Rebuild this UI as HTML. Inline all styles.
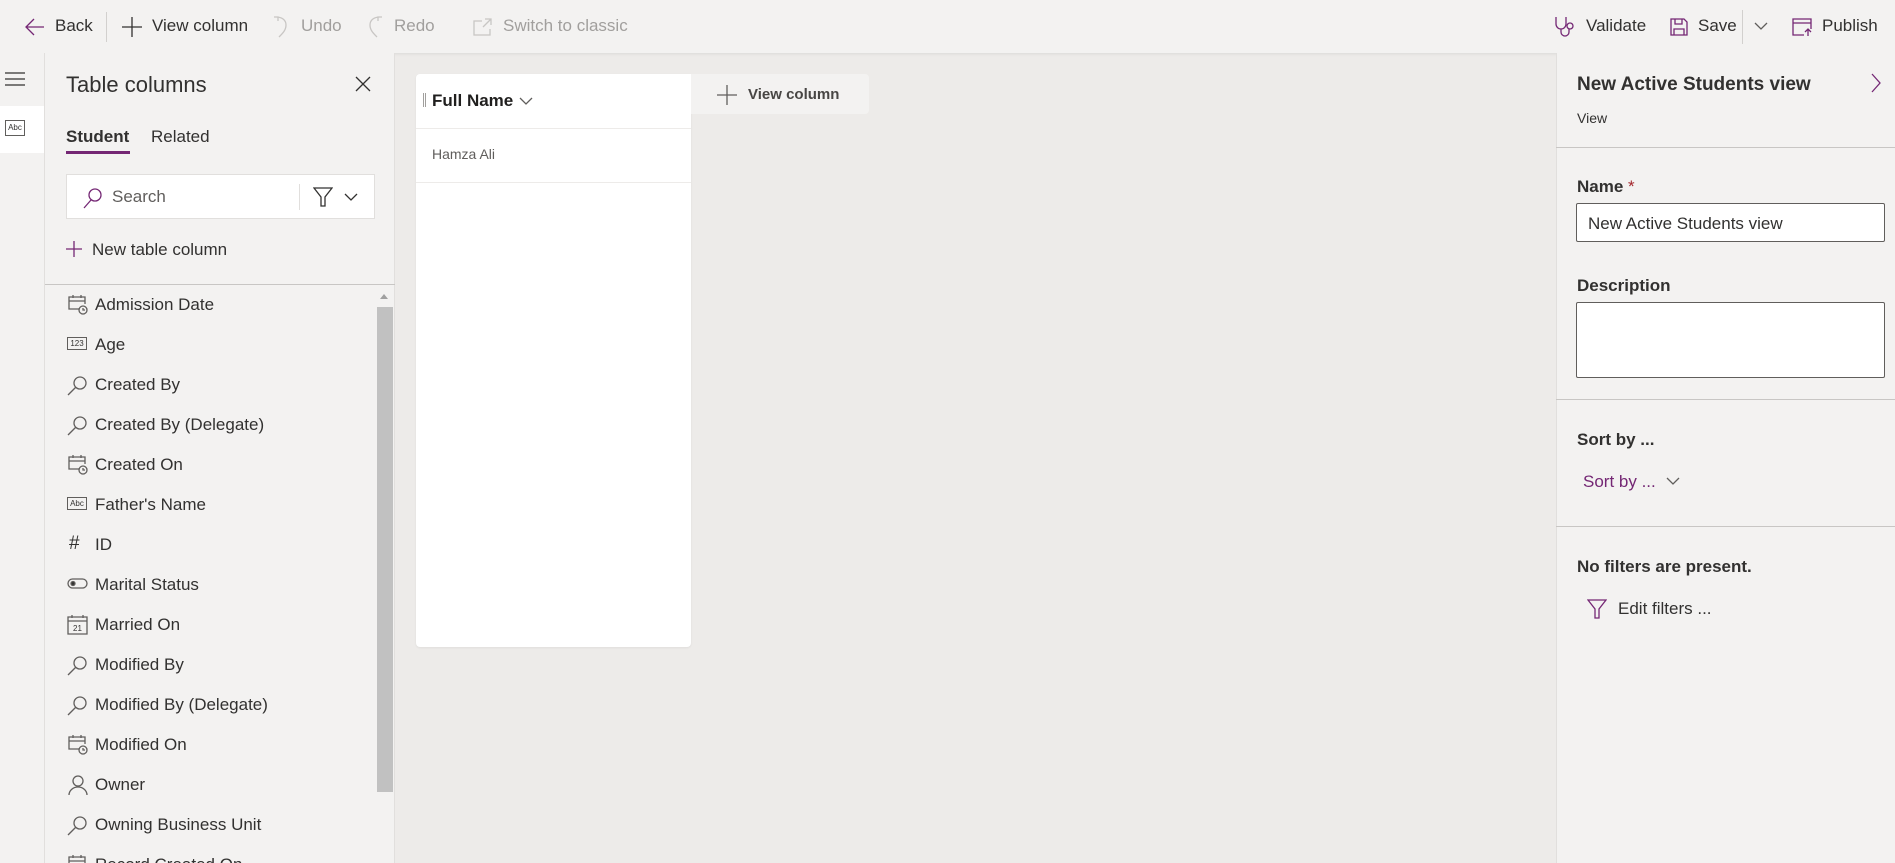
<!DOCTYPE html>
<html><head><meta charset="utf-8"><style>
*{margin:0;padding:0;box-sizing:border-box}
html{overflow:hidden;width:1895px;height:863px}
body{width:1895px;height:863px;overflow:hidden;background:#edebe9;font-family:"Liberation Sans",sans-serif;color:#323130;position:relative}
.a{position:absolute;white-space:nowrap}
svg{position:absolute;fill:none;stroke-width:1.3}
.tb{font-size:17px;top:16px}
.it{font-size:17px;color:#323130;left:95px}
</style></head><body>
<!-- toolbar -->
<div class="a" style="left:0;top:0;width:1895px;height:53px;background:#f3f2f1;box-shadow:0 1px 3px rgba(0,0,0,.08)"></div>
<svg style="left:24px;top:16px" width="22" height="22" viewBox="0 0 22 22" stroke="#742774"><path d="M20 11H3M10 3l-8 8 8 8"/></svg>
<div class="a tb" style="left:55px">Back</div>
<div class="a" style="left:106px;top:12px;width:1px;height:30px;background:#d2d0ce"></div>
<svg style="left:121px;top:16px" width="22" height="22" viewBox="0 0 22 22" stroke="#323130"><path d="M11 1v20M1 11h20"/></svg>
<div class="a tb" style="left:152px">View column</div>
<svg style="left:272px;top:15px" width="18" height="24" viewBox="0 0 18 24" stroke="#c8c6c4"><path d="M4 2c6 0 10 3 10 8s-3 8-7 12M2 2h4v4"/></svg>
<div class="a tb" style="left:301px;color:#a19f9d">Undo</div>
<svg style="left:366px;top:15px" width="18" height="24" viewBox="0 0 18 24" stroke="#c8c6c4"><path d="M14 2C8 2 4 5 4 10s3 8 7 12M16 2h-4v4"/></svg>
<div class="a tb" style="left:394px;color:#a19f9d">Redo</div>
<svg style="left:472px;top:17px" width="22" height="20" viewBox="0 0 22 20" stroke="#c8c6c4"><path d="M10 4H2v14h16v-6M13 2h6v6M19 2l-8 8"/></svg>
<div class="a tb" style="left:503px;color:#a19f9d">Switch to classic</div>
<svg style="left:1554px;top:15px" width="22" height="24" viewBox="0 0 22 24" stroke="#742774"><path d="M2 2v7a5 5 0 0 0 10 0V2M7 14v3a4 4 0 0 0 8 0v-3"/><circle cx="16" cy="11" r="3"/></svg>
<div class="a tb" style="left:1586px">Validate</div>
<svg style="left:1669px;top:17px" width="20" height="20" viewBox="0 0 20 20" stroke="#742774"><path d="M2 2h13l3 3v13H2zM6 2v5h7V2M5 18v-6h10v6"/></svg>
<div class="a tb" style="left:1698px">Save</div>
<div class="a" style="left:1742px;top:10px;width:1px;height:34px;background:#d2d0ce"></div>
<svg style="left:1754px;top:21px" width="14" height="10" viewBox="0 0 14 10" stroke="#605e5c"><path d="M1 2l6 6 6-6"/></svg>
<svg style="left:1791px;top:17px" width="22" height="20" viewBox="0 0 22 20" stroke="#742774"><path d="M13 18H2V2h18v10M2 6h18M17 19v-7M14 15l3-3 3 3"/></svg>
<div class="a tb" style="left:1822px">Publish</div>

<!-- left rail -->
<div class="a" style="left:0;top:53px;width:45px;height:810px;background:#f3f2f1;border-right:1px solid #e1dfdd"></div>
<svg style="left:5px;top:72px" width="20" height="14" viewBox="0 0 20 14" stroke="#323130"><path d="M0 1h20M0 7h20M0 13h20"/></svg>
<div class="a" style="left:0;top:106px;width:44px;height:47px;background:#fff"></div>
<div class="a" style="left:5px;top:120px;width:20px;height:16px;border:1px solid #605e5c;font-size:8px;line-height:14px;text-align:center;color:#323130">Abc</div>

<!-- table columns panel -->
<div class="a" style="left:45px;top:53px;width:350px;height:810px;background:#f3f2f1;border-right:1px solid #e1dfdd"></div>
<div class="a" style="left:66px;top:72px;font-size:22px;color:#323130">Table columns</div>
<svg style="left:355px;top:76px" width="16" height="16" viewBox="0 0 16 16" stroke="#323130"><path d="M1 1l14 14M15 1L1 15"/></svg>
<div class="a" style="left:66px;top:127px;font-size:17px;font-weight:bold;color:#323130">Student</div>
<div class="a" style="left:66px;top:151px;width:64px;height:3px;background:#742774"></div>
<div class="a" style="left:151px;top:127px;font-size:17px">Related</div>
<div class="a" style="left:66px;top:174px;width:309px;height:45px;background:#fff;border:1px solid #e1dfdd"></div>
<svg style="left:82px;top:186px" width="22" height="24" viewBox="0 0 22 24" stroke="#742774"><circle cx="13" cy="9" r="6"/><path d="M9 14L2 22"/></svg>
<div class="a" style="left:112px;top:187px;font-size:17px;color:#605e5c">Search</div>
<div class="a" style="left:299px;top:184px;width:1px;height:26px;background:#e1dfdd"></div>
<svg style="left:313px;top:186px" width="20" height="22" viewBox="0 0 20 22" stroke="#323130"><path d="M1 2h18l-7 9v9h-4v-9z"/></svg>
<svg style="left:344px;top:192px" width="14" height="10" viewBox="0 0 14 10" stroke="#323130"><path d="M1 2l6 6 6-6"/></svg>
<svg style="left:66px;top:241px" width="16" height="16" viewBox="0 0 16 16" stroke="#742774"><path d="M8 0v16M0 8h16"/></svg>
<div class="a" style="left:92px;top:240px;font-size:17px">New table column</div>
<div class="a" style="left:45px;top:284px;width:350px;height:1px;background:#c8c6c4"></div>
<div class="a" style="left:377px;top:307px;width:16px;height:485px;background:#c1c1c1"></div>
<svg style="left:379px;top:292px" width="10" height="8" viewBox="0 0 10 8"><path d="M1 7l4-5 4 5z" fill="#a0a0a0" stroke="none"/></svg>

<!-- list items -->
<div class="a it" style="top:295px">Admission Date</div>
<div class="a it" style="top:335px">Age</div>
<div class="a it" style="top:375px">Created By</div>
<div class="a it" style="top:415px">Created By (Delegate)</div>
<div class="a it" style="top:455px">Created On</div>
<div class="a it" style="top:495px">Father's Name</div>
<div class="a it" style="top:535px">ID</div>
<div class="a it" style="top:575px">Marital Status</div>
<div class="a it" style="top:615px">Married On</div>
<div class="a it" style="top:655px">Modified By</div>
<div class="a it" style="top:695px">Modified By (Delegate)</div>
<div class="a it" style="top:735px">Modified On</div>
<div class="a it" style="top:775px">Owner</div>
<div class="a it" style="top:815px">Owning Business Unit</div>
<div class="a it" style="top:855px">Record Created On</div>
<!-- list icons -->
<svg style="left:67px;top:294px" width="22" height="22" viewBox="0 0 22 22" stroke="#605e5c"><path d="M12 15H2V3h16v7M2 7h16M6 1v3M14 1v3"/><circle cx="16" cy="16" r="4"/><path d="M16 14v2h2"/></svg>
<div class="a" style="left:67px;top:337px;width:20px;height:13px;border:1px solid #605e5c;font-size:8px;line-height:11px;text-align:center">123</div>
<svg style="left:67px;top:375px" width="22" height="22" viewBox="0 0 22 22" stroke="#605e5c"><circle cx="13" cy="8" r="6"/><path d="M9 12L1 20"/></svg>
<svg style="left:67px;top:415px" width="22" height="22" viewBox="0 0 22 22" stroke="#605e5c"><circle cx="13" cy="8" r="6"/><path d="M9 12L1 20"/></svg>
<svg style="left:67px;top:454px" width="22" height="22" viewBox="0 0 22 22" stroke="#605e5c"><path d="M12 15H2V3h16v7M2 7h16M6 1v3M14 1v3"/><circle cx="16" cy="16" r="4"/><path d="M16 14v2h2"/></svg>
<div class="a" style="left:67px;top:497px;width:20px;height:13px;border:1px solid #605e5c;font-size:8px;line-height:11px;text-align:center">Abc</div>
<div class="a" style="left:69px;top:533px;font-size:19px;color:#323130">#</div>
<svg style="left:67px;top:577px" width="22" height="14" viewBox="0 0 22 14" stroke="#605e5c"><rect x="1" y="2" width="19" height="9" rx="4.5"/><circle cx="6" cy="6.5" r="2" fill="#323130"/></svg>
<svg style="left:67px;top:614px" width="22" height="22" viewBox="0 0 22 22" stroke="#605e5c"><path d="M1 3h19v17H1zM1 7h19M5 1v3M16 1v3"/><text x="10.5" y="17" font-size="8" text-anchor="middle" fill="#323130" stroke="none" font-family="Liberation Sans">21</text></svg>
<svg style="left:67px;top:655px" width="22" height="22" viewBox="0 0 22 22" stroke="#605e5c"><circle cx="13" cy="8" r="6"/><path d="M9 12L1 20"/></svg>
<svg style="left:67px;top:695px" width="22" height="22" viewBox="0 0 22 22" stroke="#605e5c"><circle cx="13" cy="8" r="6"/><path d="M9 12L1 20"/></svg>
<svg style="left:67px;top:734px" width="22" height="22" viewBox="0 0 22 22" stroke="#605e5c"><path d="M12 15H2V3h16v7M2 7h16M6 1v3M14 1v3"/><circle cx="16" cy="16" r="4"/><path d="M16 14v2h2"/></svg>
<svg style="left:67px;top:774px" width="22" height="22" viewBox="0 0 22 22" stroke="#605e5c"><circle cx="11" cy="7" r="5"/><path d="M2 21a9 8 0 0 1 18 0"/></svg>
<svg style="left:67px;top:815px" width="22" height="22" viewBox="0 0 22 22" stroke="#605e5c"><circle cx="13" cy="8" r="6"/><path d="M9 12L1 20"/></svg>
<svg style="left:67px;top:854px" width="22" height="22" viewBox="0 0 22 22" stroke="#605e5c"><path d="M12 15H2V3h16v7M2 7h16M6 1v3M14 1v3"/></svg>

<!-- grid card -->
<div class="a" style="left:416px;top:74px;width:275px;height:573px;background:#fff;border-radius:4px 0 4px 4px;box-shadow:0 1px 2px rgba(0,0,0,.06)"></div>
<div class="a" style="left:423px;top:93px;width:1px;height:14px;background:#a19f9d"></div>
<div class="a" style="left:425px;top:93px;width:1px;height:14px;background:#a19f9d"></div>
<div class="a" style="left:432px;top:91px;font-size:17px;font-weight:bold;color:#201f1e">Full Name</div>
<svg style="left:519px;top:96px" width="14" height="10" viewBox="0 0 14 10" stroke="#605e5c"><path d="M1 2l6 6 6-6"/></svg>
<div class="a" style="left:416px;top:128px;width:275px;height:1px;background:#edebe9"></div>
<div class="a" style="left:432px;top:146px;font-size:14px;color:#605e5c">Hamza Ali</div>
<div class="a" style="left:416px;top:182px;width:275px;height:1px;background:#edebe9"></div>
<div class="a" style="left:691px;top:74px;width:178px;height:40px;background:#f3f2f1;border-radius:0 4px 4px 0"></div>
<svg style="left:717px;top:85px" width="20" height="20" viewBox="0 0 20 20" stroke="#605e5c"><path d="M10 0v20M0 10h20"/></svg>
<div class="a" style="left:748px;top:86px;font-size:15px;font-weight:bold;color:#484644">View column</div>

<!-- right panel -->
<div class="a" style="left:1556px;top:53px;width:339px;height:810px;background:#f3f2f1;border-left:1px solid #e1dfdd"></div>
<div class="a" style="left:1577px;top:74px;font-size:19px;font-weight:bold;color:#323130">New Active Students view</div>
<svg style="left:1870px;top:72px" width="12" height="22" viewBox="0 0 12 22" stroke="#742774"><path d="M2 2l8 9-8 9"/></svg>
<div class="a" style="left:1577px;top:110px;font-size:14px">View</div>
<div class="a" style="left:1556px;top:147px;width:339px;height:1px;background:#c8c6c4"></div>
<div class="a" style="left:1577px;top:177px;font-size:17px;font-weight:bold">Name <span style="color:#a4262c;font-weight:normal">*</span></div>
<div class="a" style="left:1576px;top:203px;width:309px;height:39px;background:#fff;border:1px solid #605e5c;border-radius:2px"></div>
<div class="a" style="left:1588px;top:214px;font-size:17px">New Active Students view</div>
<div class="a" style="left:1577px;top:276px;font-size:17px;font-weight:bold">Description</div>
<div class="a" style="left:1576px;top:302px;width:309px;height:76px;background:#fff;border:1px solid #605e5c;border-radius:2px"></div>
<div class="a" style="left:1556px;top:399px;width:339px;height:1px;background:#c8c6c4"></div>
<div class="a" style="left:1577px;top:430px;font-size:17px;font-weight:bold">Sort by ...</div>
<div class="a" style="left:1583px;top:472px;font-size:17px;color:#742774">Sort by ...</div>
<svg style="left:1666px;top:476px" width="14" height="10" viewBox="0 0 14 10" stroke="#605e5c"><path d="M1 2l6 6 6-6"/></svg>
<div class="a" style="left:1556px;top:526px;width:339px;height:1px;background:#c8c6c4"></div>
<div class="a" style="left:1577px;top:557px;font-size:17px;font-weight:bold">No filters are present.</div>
<svg style="left:1587px;top:598px" width="20" height="22" viewBox="0 0 20 22" stroke="#742774"><path d="M1 2h18l-7 9v9h-4v-9z"/></svg>
<div class="a" style="left:1618px;top:599px;font-size:17px">Edit filters ...</div>
</body></html>
